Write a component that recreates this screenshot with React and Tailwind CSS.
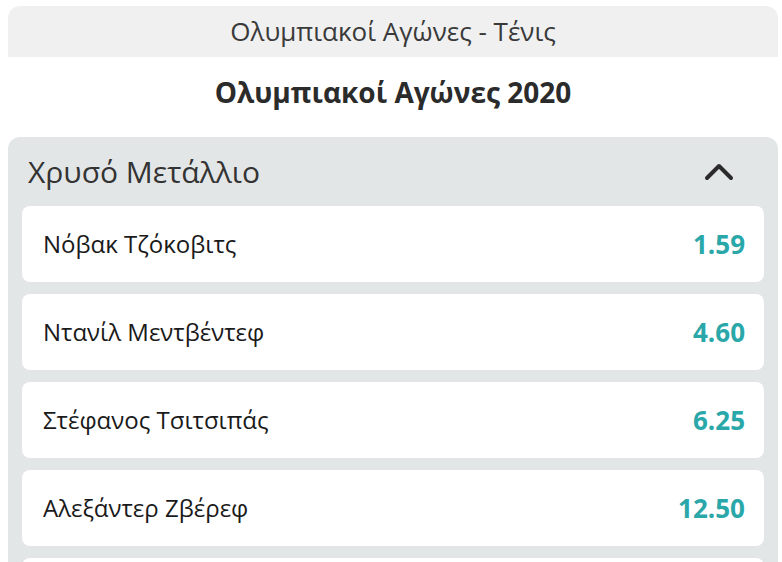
import { ChevronUp } from "lucide-react";

const runners = [
  { name: "Νόβακ Τζόκοβιτς", odds: "1.59" },
  { name: "Ντανίλ Μεντβέντεφ", odds: "4.60" },
  { name: "Στέφανος Τσιτσιπάς", odds: "6.25" },
  { name: "Αλεξάντερ Ζβέρεφ", odds: "12.50" },
];

function OddsRow({ name, odds }) {
  return (
    <div className="flex h-[76px] shrink-0 items-center justify-between rounded-[8px] bg-white pl-[21px] pr-[19px]">
      <span className="text-[24px] text-[#1a1a1a]">{name}</span>
      <span className="text-[26px] font-bold text-[#2aa7a9]">{odds}</span>
    </div>
  );
}

export default function App() {
  return (
    <div
      className="h-[562px] w-[782px] overflow-hidden bg-white pt-[6px] pl-[8px] pr-[4px]"
      style={{ fontFamily: '"Open Sans", sans-serif' }}
    >
      {/* sport breadcrumb */}
      <div className="flex h-[51px] items-center justify-center rounded-t-[12px] bg-[#f0f0f0]">
        <span className="text-[26px] text-[#3a3a3a]">Ολυμπιακοί Αγώνες - Τένις</span>
      </div>

      <div className="flex h-[80px] items-start justify-center pt-[14px]">
        <h1 className="text-[28px] font-bold text-[#2b2b2b]">Ολυμπιακοί Αγώνες 2020</h1>
      </div>

      {/* market card */}
      <div className="rounded-t-[12px] bg-[#e3e6e7] px-[14px]">
        <div className="flex h-[69px] items-center justify-between pl-[6px] pr-[21px]">
          <span className="text-[30px] text-[#333]">Χρυσό Μετάλλιο</span>
          <ChevronUp className="h-[48px] w-[48px] text-[#2b2b2b]" strokeWidth={2} absoluteStrokeWidth={false} />
        </div>
        <div className="flex flex-col gap-[12px]">
          {runners.map((r) => (
            <OddsRow key={r.name} {...r} />
          ))}
          <div className="h-[76px] shrink-0 rounded-[8px] bg-white" />
        </div>
      </div>
    </div>
  );
}
